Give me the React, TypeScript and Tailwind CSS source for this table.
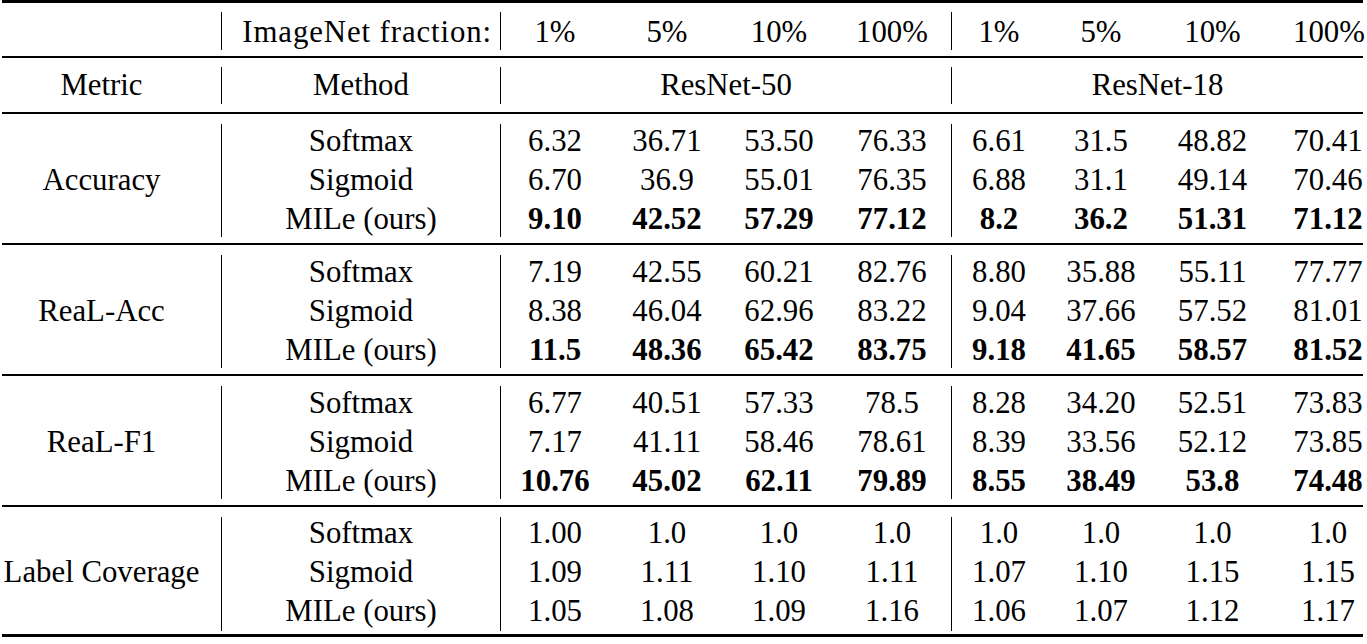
type Row = { method: string; vals: string[]; bold?: boolean };
type Section = { metric: string; rows: Row[] };

const sections: Section[] = [
  {
    metric: 'Accuracy',
    rows: [
      { method: 'Softmax', vals: ['6.32', '36.71', '53.50', '76.33', '6.61', '31.5', '48.82', '70.41'] },
      { method: 'Sigmoid', vals: ['6.70', '36.9', '55.01', '76.35', '6.88', '31.1', '49.14', '70.46'] },
      { method: 'MILe (ours)', vals: ['9.10', '42.52', '57.29', '77.12', '8.2', '36.2', '51.31', '71.12'], bold: true },
    ],
  },
  {
    metric: 'ReaL-Acc',
    rows: [
      { method: 'Softmax', vals: ['7.19', '42.55', '60.21', '82.76', '8.80', '35.88', '55.11', '77.77'] },
      { method: 'Sigmoid', vals: ['8.38', '46.04', '62.96', '83.22', '9.04', '37.66', '57.52', '81.01'] },
      { method: 'MILe (ours)', vals: ['11.5', '48.36', '65.42', '83.75', '9.18', '41.65', '58.57', '81.52'], bold: true },
    ],
  },
  {
    metric: 'ReaL-F1',
    rows: [
      { method: 'Softmax', vals: ['6.77', '40.51', '57.33', '78.5', '8.28', '34.20', '52.51', '73.83'] },
      { method: 'Sigmoid', vals: ['7.17', '41.11', '58.46', '78.61', '8.39', '33.56', '52.12', '73.85'] },
      { method: 'MILe (ours)', vals: ['10.76', '45.02', '62.11', '79.89', '8.55', '38.49', '53.8', '74.48'], bold: true },
    ],
  },
  {
    metric: 'Label Coverage',
    rows: [
      { method: 'Softmax', vals: ['1.00', '1.0', '1.0', '1.0', '1.0', '1.0', '1.0', '1.0'] },
      { method: 'Sigmoid', vals: ['1.09', '1.11', '1.10', '1.11', '1.07', '1.10', '1.15', '1.15'] },
      { method: 'MILe (ours)', vals: ['1.05', '1.08', '1.09', '1.16', '1.06', '1.07', '1.12', '1.17'] },
    ],
  },
];

// column boxes, tuned so the centres sit where the reference has them
const colsA = ['w-[108px]', 'w-[116px]', 'w-[108px]', 'w-[118px]'];
const colsB = ['w-[94px]', 'w-[110px]', 'w-[113px]', 'w-[94px] pl-[24px]'];
const pct = ['1%', '5%', '10%', '100%'];

function Bar({ className }: { className: string }) {
  return <div className={`w-px shrink-0 self-stretch bg-black ${className}`} />;
}

export default function App() {
  return (
    <div className="bg-white min-h-screen text-black font-['Liberation_Serif',serif] text-[30.8px]">
      <div className="ml-[2px] w-[1361px]">
        <div className="h-[3px] bg-black" />

        {/* ImageNet fraction */}
        <div className="flex h-[53px] items-center">
          <div className="w-[219px]" />
          <Bar className="mt-[9px] mb-[6px]" />
          <div className="mt-[5px] w-[278px] pr-[8px] text-right tracking-[0.9px]">ImageNet fraction:</div>
          <Bar className="mt-[9px] mb-[6px]" />
          {colsA.map((c, i) => (
            <div key={'a' + i} className={`${c} mt-[5px] text-center`}>{pct[i]}</div>
          ))}
          <Bar className="mt-[9px] mb-[6px]" />
          {colsB.map((c, i) => (
            <div key={'b' + i} className={`${c} mt-[5px] text-center`}>{pct[i]}</div>
          ))}
        </div>
        <div className="h-[2px] bg-black" />

        {/* Metric / Method */}
        <div className="flex h-[54px] items-center">
          <div className="w-[219px] pr-[20px] text-center">Metric</div>
          <Bar className="mt-[9px] mb-[8px]" />
          <div className="w-[278px] text-center">Method</div>
          <Bar className="mt-[9px] mb-[8px]" />
          <div className="w-[450px] text-center">ResNet-50</div>
          <Bar className="mt-[9px] mb-[8px]" />
          <div className="w-[411px] text-center">ResNet-18</div>
        </div>
        <div className="h-[2px] bg-black" />

        {sections.map((s, si) => {
          const last = si === sections.length - 1;
          const bar = last ? 'mt-[10px] mb-[3px]' : 'mt-[10px] mb-[6px]';
          return (
            <div key={s.metric}>
              <div className={`flex items-center leading-[39px] ${last ? 'h-[127px]' : 'h-[129px]'}`}>
                <div className="mt-[4px] w-[219px] pr-[20px] text-center">{s.metric}</div>
                <Bar className={bar} />
                <div className="mt-[4px] w-[278px] flex flex-col text-center">
                  {s.rows.map(r => (
                    <span key={r.method}>{r.method}</span>
                  ))}
                </div>
                <Bar className={bar} />
                {colsA.map((c, i) => (
                  <div key={'a' + i} className={`${c} mt-[4px] flex flex-col text-center`}>
                    {s.rows.map(r => (
                      <span key={r.method} className={r.bold ? 'font-bold' : ''}>{r.vals[i]}</span>
                    ))}
                  </div>
                ))}
                <Bar className={bar} />
                {colsB.map((c, i) => (
                  <div key={'b' + i} className={`${c} mt-[4px] flex flex-col text-center`}>
                    {s.rows.map(r => (
                      <span key={r.method} className={r.bold ? 'font-bold' : ''}>{r.vals[i + 4]}</span>
                    ))}
                  </div>
                ))}
              </div>
              <div className={last ? 'h-[3px] bg-black' : 'h-[2px] bg-black'} />
            </div>
          );
        })}
      </div>
    </div>
  );
}
